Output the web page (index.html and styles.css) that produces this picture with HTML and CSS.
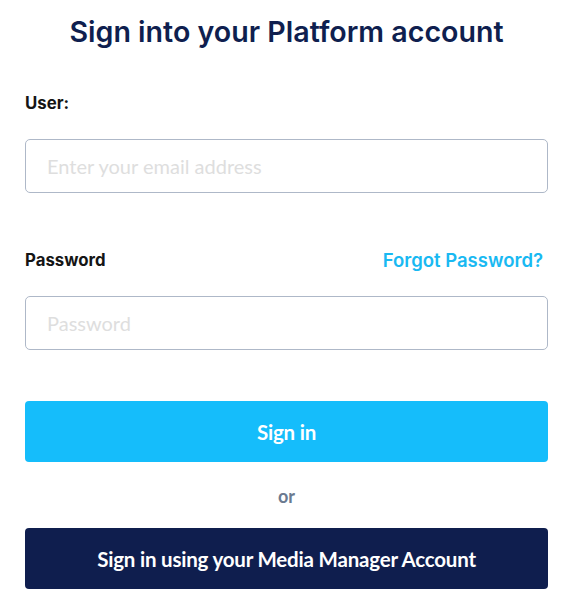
FILE: index.html
```html
<!DOCTYPE html>
<html>
<head>
<meta charset="utf-8">
<link rel="stylesheet" href="styles.css">
</head>
<body>
<div class="page">
  <h1 class="title">Sign into your Platform account</h1>
  <form class="form">
    <div class="field">
      <div class="label-row"><label class="label">User:</label></div>
      <input class="input" type="text" placeholder="Enter your email address">
    </div>
    <div class="field field-pw">
      <div class="label-row">
        <label class="label">Password</label>
        <a class="forgot" href="#">Forgot Password?</a>
      </div>
      <input class="input" type="password" placeholder="Password">
    </div>
    <button class="btn btn-primary" type="button">Sign in</button>
    <div class="or">or</div>
    <button class="btn btn-dark" type="button">Sign in using your Media Manager Account</button>
  </form>
</div>
</body>
</html>
```
FILE: styles.css
```css
* { box-sizing: border-box; }
html, body { margin: 0; padding: 0; background: #fff; }
.page {
  width: 523px;
  margin-left: 25px;
  font-family: Inter, "Noto Sans", sans-serif;
}
.title {
  margin: 0;
  padding-top: 14px;
  text-align: center;
  font-size: 28.6px;
  font-weight: 600;
  color: #0f1f4f;
  letter-spacing: 0;
  line-height: 36px;
}
.form { display: flex; flex-direction: column; }
.field { display: flex; flex-direction: column; }
.field:first-child { margin-top: 42px; }
.field-pw { margin-top: 56px; }
.label-row {
  display: flex;
  justify-content: space-between;
  align-items: center;
  height: 22px;
  margin-bottom: 25px;
}
.label {
  font-size: 16.8px;
  font-weight: 700;
  color: #151515;
}
.forgot {
  font-size: 18.5px;
  font-weight: 600;
  color: #19b9f2;
  text-decoration: none;
  margin-right: 5px;
}
.input {
  height: 54px;
  width: 100%;
  border: 1px solid #aeb8c8;
  border-radius: 5px;
  padding: 0 21px;
  font-family: Lato, sans-serif;
  font-size: 20px;
  color: #333;
  outline: none;
}
.input::placeholder { color: #dedede; }
.btn {
  height: 61px;
  width: 100%;
  border: none;
  border-radius: 4px;
  font-family: Lato, sans-serif;
  font-weight: 700;
  font-size: 20.5px;
  color: #fff;
  letter-spacing: -0.2px;
}
.btn-primary { background: #15bdfb; margin-top: 51px; }
.btn-dark { background: #0f1e4e; }
.or {
  text-align: center;
  font-family: Lato, sans-serif;
  font-weight: 700;
  font-size: 18px;
  color: #6b7a90;
  height: 66px;
  line-height: 68px;
}
```
